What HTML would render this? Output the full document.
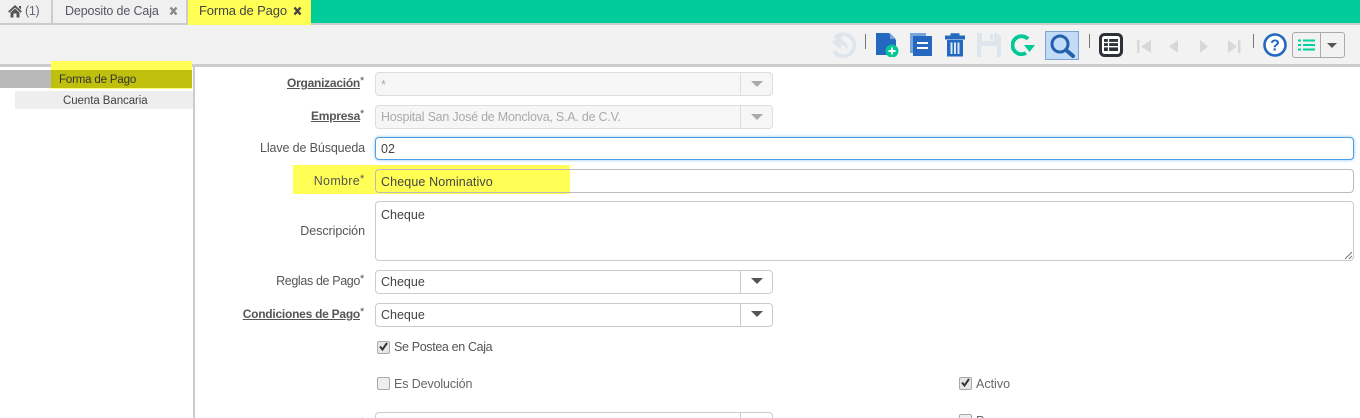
<!DOCTYPE html>
<html><head><meta charset="utf-8">
<style>
html,body{margin:0;padding:0;background:#fff}
#p{position:relative;width:1360px;height:418px;overflow:hidden;font-family:"Liberation Sans",sans-serif;font-size:12.5px;color:#444;background:#fff}
#p div,#p svg{position:absolute}
.t{white-space:nowrap;line-height:16px}
.l{white-space:nowrap;right:995px;text-align:right;line-height:16px;color:#555}
.l sup{font-size:11px;line-height:0;position:relative;top:-3px;vertical-align:baseline;display:inline-block;width:5px;text-align:left;letter-spacing:0;font-weight:normal;text-decoration:none}
.b{font-weight:bold;font-size:12px;letter-spacing:-.25px}
.b span{text-decoration:underline}
.i{left:375px;width:396px;border:1px solid #ccc;border-radius:4px;background:#fff;box-sizing:content-box}
.d{background:#f6f6f6;border-color:#ddd}
.v{left:381px;white-space:nowrap;line-height:16px;color:#444}
.s{left:740px;width:1px;background:#ccc}
.ar{left:751px;width:0;height:0;border-left:6px solid transparent;border-right:6px solid transparent;border-top:6px solid #555}
.c{width:11px;height:11px;border:1px solid #aaa;border-radius:2px;background:#e6e6e6}
</style></head><body><div id="p">
<div style="left:0;top:0;width:1360px;height:23px;background:#00cc99"></div>
<div style="left:0;top:0;width:51px;height:23px;background:#f0f0f0"></div>
<div style="left:53px;top:0;width:133px;height:23px;background:#f0f0f0"></div>
<div style="left:51px;top:0;width:2px;height:23px;background:#ccc"></div>
<div style="left:186px;top:0;width:2px;height:23px;background:#ccc"></div>
<div style="left:0;top:23px;width:1360px;height:2px;background:#ccc"></div>
<div style="left:188px;top:0;width:123px;height:25px;background:#ffff55"></div>
<svg style="left:7px;top:4px" width="16" height="14" viewBox="0 0 16 14"><path d="M8 1 L15 7.5 L13.6 8.6 L8 3.6 L2.4 8.6 L1 7.5Z M3.5 8.5 L8 4.6 L12.5 8.5 V13.5 H9.5 V9.5 H6.5 V13.5 H3.5Z M12 2h2v3.5l-2-1.8z" fill="#555"/></svg>
<div class="t" style="left:25px;top:3px;color:#667;letter-spacing:-.3px">(1)</div>
<div class="t" style="left:65px;top:3px;color:#556;letter-spacing:-.14px">Deposito de Caja</div>
<svg style="left:169px;top:6px" width="9" height="10" viewBox="0 0 9 10"><path d="M1.5 1.5L7.5 8.5M7.5 1.5L1.5 8.5" stroke="#888" stroke-width="2.4"/></svg>
<div class="t" style="left:199px;top:3px;color:#444;font-size:13px;letter-spacing:-.13px">Forma de Pago</div>
<svg style="left:293px;top:6px" width="9" height="10" viewBox="0 0 9 10"><path d="M1.5 1.5L7.5 8.5M7.5 1.5L1.5 8.5" stroke="#444" stroke-width="2.4"/></svg>

<div style="left:0;top:25px;width:1360px;height:39px;background:#f2f2f2"></div>
<div style="left:0;top:64px;width:1360px;height:3px;background:#ccc"></div>

<svg style="left:830px;top:32px" width="26" height="26" viewBox="0 0 26 26"><path d="M5 6A11 11 0 1 1 4 19" fill="none" stroke="#dfe5ec" stroke-width="3.6"/><path d="M2 10L12 3L11.5 8Q18 10 18 18Q15 13 11 13L10.5 17Z" fill="#dfe5ec"/></svg>
<div style="left:865px;top:34px;width:1px;height:15px;background:#777"></div>
<svg style="left:876px;top:33px" width="24" height="24" viewBox="0 0 24 24"><path d="M0 0H13L20 7V22H0Z" fill="#2468c0"/><path d="M14 0L20 6H14Z" fill="#7aa5dc"/><circle cx="16" cy="18" r="6.5" fill="#00c896"/><path d="M16 14.5V21.5M12.5 18H19.5" stroke="#fff" stroke-width="2"/></svg>
<svg style="left:910px;top:33px" width="22" height="23" viewBox="0 0 22 23"><path d="M0 0H16V3H3V20H0Z" fill="#7aa5dc"/><path d="M3 3H22V23H3Z" fill="#2468c0"/><path d="M7 10H18M7 15H18" stroke="#fff" stroke-width="2"/></svg>
<svg style="left:945px;top:33px" width="20" height="24" viewBox="0 0 20 24"><path d="M0 3H20V6H0ZM6 3V0.7H14V3" fill="#2468c0" stroke="#2468c0"/><path d="M2 7H18V23.5H2Z" fill="#2468c0"/><path d="M6.5 9.5V21M10 9.5V21M13.5 9.5V21" stroke="#dbe7f5" stroke-width="2"/></svg>
<svg style="left:977px;top:33px" width="24" height="24" viewBox="0 0 24 24"><path d="M0 0H20L24 4V24H0Z" fill="#dfe5ec"/><path d="M5 0H17V8H5Z" fill="#f2f2f2"/><path d="M13 1H16V7H13Z" fill="#dfe5ec"/><path d="M4 13H20V24H4Z" fill="#f2f2f2"/></svg>
<svg style="left:1011px;top:33px" width="25" height="24" viewBox="0 0 25 24"><path d="M17.500 13A9 9 0 1 1 15.500 5.500M15 20" fill="none" stroke="#00c896" stroke-width="0"/><path d="M17 6A9 9 0 1 0 15 20" fill="none" stroke="#00c896" stroke-width="3.8"/><path d="M13 12H24L18.500 19Z" fill="#00c896"/></svg>
<div style="left:1045px;top:31px;width:32px;height:27px;background:#c2dbf7;border:1px solid #7fa2cf"></div>
<svg style="left:1048px;top:33px" width="28" height="26" viewBox="0 0 28 26"><circle cx="12" cy="11" r="8" fill="none" stroke="#2460ab" stroke-width="3"/><path d="M18 17L25 23" stroke="#2460ab" stroke-width="4" stroke-linecap="round"/></svg>
<div style="left:1089px;top:34px;width:1px;height:14px;background:#777"></div>

<svg style="left:1099px;top:33px" width="24" height="24" viewBox="0 0 24 24"><rect x="1.5" y="1.5" width="21" height="21" rx="4" fill="#fff" stroke="#2c3238" stroke-width="3"/><path d="M5 6H19V18H5Z" fill="#2c3238"/><path d="M5 9.5H19M5 13.7H19M9.5 6V18" stroke="#fff" stroke-width="1.3"/></svg>
<svg style="left:1137px;top:40px" width="105" height="13" viewBox="0 0 105 13"><g fill="#d8d8d8"><path d="M0 0H2.5V13H0ZM4 6.5L14 0V13Z"/><path d="M32 6.5L41 0V13Z"/><path d="M63 0L71 6.5L63 13Z"/><path d="M91 0L100 6.5L91 13ZM101 0H103.500V13H101Z"/></g></svg>
<div style="left:1253px;top:34px;width:1px;height:14px;background:#777"></div>
<svg style="left:1262px;top:32px" width="26" height="26" viewBox="0 0 26 26"><circle cx="13" cy="13" r="10.5" fill="#fff" stroke="#2468c0" stroke-width="2.6"/><text x="13" y="18.5" font-family="Liberation Sans" font-size="16" font-weight="bold" fill="#2468c0" text-anchor="middle">?</text></svg>
<div style="left:1292px;top:32px;width:51px;height:24px;border:1px solid #aaa;border-radius:3px;background:#f2f2f2"></div>
<div style="left:1320px;top:33px;width:1px;height:24px;background:#aaa"></div>
<svg style="left:1298px;top:39px" width="18" height="12" viewBox="0 0 18 12"><path d="M0 1.500H3M5 1.500H17M0 6H3M5 6H17M0 10.500H3M5 10.500H17" stroke="#00d29b" stroke-width="2"/></svg>
<div style="left:1327px;top:43px;width:0;height:0;border-left:5px solid transparent;border-right:5px solid transparent;border-top:5px solid #555"></div>

<div style="left:0;top:70px;width:51px;height:18px;background:#b9b9b9"></div>
<div style="left:51px;top:61px;width:141px;height:9px;background:#ffff55"></div>
<div style="left:51px;top:70px;width:141px;height:18px;background:#bfbf0e"></div>
<div style="left:51px;top:88px;width:141px;height:1px;background:#ffff77"></div>
<div class="t" style="left:59px;top:72px;font-size:11.5px;letter-spacing:-.17px;color:#333">Forma de Pago</div>
<div style="left:15px;top:91px;width:178px;height:18px;background:#eee"></div>
<div class="t" style="left:63px;top:93px;font-size:11.5px;letter-spacing:-.07px;color:#444">Cuenta Bancaria</div>
<div style="left:193px;top:67px;width:2px;height:351px;background:#ccc"></div>

<div class="l b" style="top:75px"><span>Organización</span><sup>*</sup></div>
<div class="i d" style="top:72px;height:22px"></div><div class="s" style="top:73px;height:22px;background:#ddd"></div><div class="ar" style="top:81px;border-top-color:#aaa"></div>
<div class="v" style="top:77px;color:#aaa">*</div>

<div class="l b" style="top:108px"><span>Empresa</span><sup>*</sup></div>
<div class="i d" style="top:105px;height:22px"></div><div class="s" style="top:106px;height:22px;background:#ddd"></div><div class="ar" style="top:114px;border-top-color:#aaa"></div>
<div class="v" style="top:109px;color:#aaa;letter-spacing:-.23px">Hospital San José de Monclova, S.A. de C.V.</div>

<div class="l" style="top:140px;letter-spacing:-.12px">Llave de Búsqueda</div>
<div class="i" style="top:137px;height:21px;width:977px;border:1px solid #4a9fe8;box-shadow:0 0 3px #8cc4f2"></div>
<div class="v" style="top:141px">02</div>

<div style="left:293px;top:165px;width:277px;height:29px;background:#ffff55"></div>
<div class="l" style="top:173px;letter-spacing:.3px">Nombre<sup>*</sup></div>
<div class="i" style="top:169px;height:22px;width:977px;background:transparent;border-color:#bbb"></div>
<div class="v" style="top:174px;letter-spacing:.12px">Cheque Nominativo</div>

<div class="l" style="top:223px;letter-spacing:-.05px">Descripción</div>
<div class="i" style="top:201px;height:58px;width:977px"></div>
<div class="v" style="top:207px">Cheque</div>
<svg style="left:1344px;top:251px" width="9" height="9" viewBox="0 0 9 9"><path d="M8 1L1 8M8 5L5 8" stroke="#777"/></svg>

<div class="l" style="top:273px;letter-spacing:-.36px">Reglas de Pago<sup>*</sup></div>
<div class="i" style="top:270px;height:22px"></div><div class="s" style="top:271px;height:22px"></div><div class="ar" style="top:278px"></div>
<div class="v" style="top:274px">Cheque</div>

<div class="l b" style="top:306px"><span>Condiciones de Pago</span><sup>*</sup></div>
<div class="i" style="top:303px;height:22px"></div><div class="s" style="top:304px;height:22px"></div><div class="ar" style="top:311px"></div>
<div class="v" style="top:307px">Cheque</div>

<div class="c" style="left:377px;top:341px"></div>
<svg style="left:378px;top:341px" width="11" height="11" viewBox="0 0 11 11"><path d="M2 5.500L4.500 8.500L9 2" fill="none" stroke="#333" stroke-width="2"/></svg>
<div class="t" style="left:394px;top:339px;color:#555;letter-spacing:-.35px">Se Postea en Caja</div>

<div class="c" style="left:377px;top:377px;background:#eee"></div>
<div class="t" style="left:394px;top:376px;color:#666;letter-spacing:-.12px">Es Devolución</div>

<div class="c" style="left:959px;top:377px"></div>
<svg style="left:960px;top:377px" width="11" height="11" viewBox="0 0 11 11"><path d="M2 5.500L4.500 8.500L9 2" fill="none" stroke="#333" stroke-width="2"/></svg>
<div class="t" style="left:976px;top:376px;color:#666">Activo</div>

<div class="l" style="top:416px;color:#777;letter-spacing:.4px">Clasificación de Pago<sup>*</sup></div>
<div class="i" style="top:412px;height:22px"></div><div class="s" style="top:413px;height:22px"></div>
<div class="c" style="left:959px;top:414px;background:#eee"></div>
<div class="t" style="left:976px;top:413px;color:#666">Pago</div>
</div></body></html>
